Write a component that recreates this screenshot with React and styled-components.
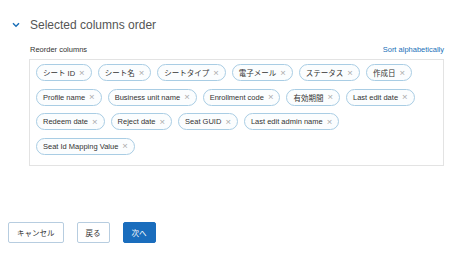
import React from "react";
import styled, { createGlobalStyle } from "styled-components";

const Global = createGlobalStyle`
  html, body { margin: 0; padding: 0; background: #fff; }
  body { font-family: "Liberation Sans", "Noto Sans CJK JP", sans-serif; }
`;

const Page = styled.div`
  width: 474px;
  height: 257px;
  padding-top: 17px;
  box-sizing: border-box;
  overflow: hidden;
`;

const Header = styled.div`
  display: flex;
  align-items: center;
  gap: 10px;
  padding-left: 12px;
  height: 16px;
`;

const Title = styled.h2`
  margin: 0;
  font-size: 12px;
  font-weight: normal;
  color: #555;
  line-height: 16px;
`;

const Content = styled.div`
  margin-left: 29px;
  width: 415px;
`;

const LabelRow = styled.div`
  display: flex;
  justify-content: space-between;
  align-items: center;
  height: 12px;
  margin-top: 10px;
  padding-left: 1px;
`;

const Label = styled.span`
  font-size: 7.5px;
  color: #333;
`;

const SortLink = styled.a`
  font-size: 7.5px;
  color: #1a6fb8;
  text-decoration: none;
`;

const Box = styled.div`
  margin-top: 4px;
  border: 1px solid #e3e3e3;
  height: 107px;
  box-sizing: border-box;
  padding: 4px 25px 4px 6px;
  display: flex;
  flex-wrap: wrap;
  align-content: flex-start;
  gap: 7.5px 6px;
`;

const Chip = styled.span`
  display: inline-flex;
  align-items: center;
  gap: 4px;
  height: 17px;
  box-sizing: border-box;
  padding: 0 6px;
  border: 1px solid #a9cde4;
  border-radius: 9px;
  background: #fbfdfe;
  font-size: 7.5px;
  color: #333;
  white-space: nowrap;
`;

const Remove = styled.span`
  color: #aaa;
  font-size: 9.5px;
  line-height: 1;
`;

const Buttons = styled.div`
  display: flex;
  gap: 13px;
  margin-top: 56px;
  padding-left: 8px;
`;

const Button = styled.button`
  height: 21px;
  padding: 0 8px;
  border-radius: 2px;
  font-family: inherit;
  font-size: 7.5px;
  border: 1px solid ${(p) => (p.$primary ? "#1a6dbd" : "#b7cde0")};
  background: ${(p) => (p.$primary ? "#1a6dbd" : "#fff")};
  color: ${(p) => (p.$primary ? "#fff" : "#333")};
`;

const columns = [
  "シート ID",
  "シート名",
  "シートタイプ",
  "電子メール",
  "ステータス",
  "作成日",
  "Profile name",
  "Business unit name",
  "Enrollment code",
  "有効期間",
  "Last edit date",
  "Redeem date",
  "Reject date",
  "Seat GUID",
  "Last edit admin name",
  "Seat Id Mapping Value",
];

const Chevron = () => (
  <svg width="8" height="6" viewBox="0 0 8 6">
    <path d="M1 1.2 L4 4.3 L7 1.2" fill="none" stroke="#1a6fb8" strokeWidth="1.4" />
  </svg>
);

export default function App() {
  return (
    <>
      <Global />
      <Page>
        <Header>
          <Chevron />
          <Title>Selected columns order</Title>
        </Header>
        <Content>
          <LabelRow>
            <Label>Reorder columns</Label>
            <SortLink href="#">Sort alphabetically</SortLink>
          </LabelRow>
          <Box>
            {columns.map((c) => (
              <Chip key={c}>
                {c}
                <Remove>×</Remove>
              </Chip>
            ))}
          </Box>
        </Content>
        <Buttons>
          <Button>キャンセル</Button>
          <Button>戻る</Button>
          <Button $primary>次へ</Button>
        </Buttons>
      </Page>
    </>
  );
}
